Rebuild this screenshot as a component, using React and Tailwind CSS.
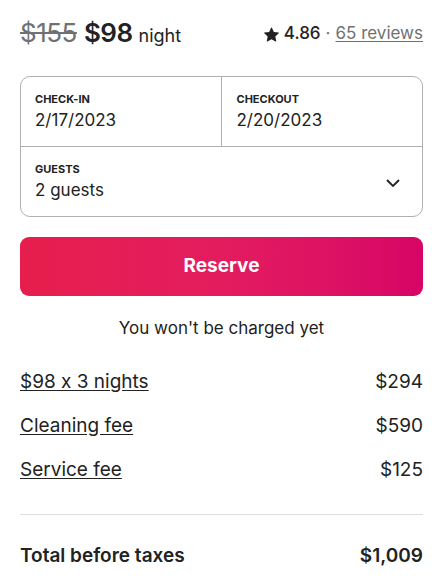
import React from "react";

function Star() {
  return (
    <svg viewBox="0 0 32 32" className="w-[15px] h-[15px]" fill="#222">
      <path d="M15.1 1.58l-4.13 8.88-9.86 1.27a1 1 0 0 0-.54 1.74l7.3 6.57-1.97 9.85a1 1 0 0 0 1.48 1.06l8.62-5 8.63 5a1 1 0 0 0 1.48-1.06l-1.97-9.85 7.3-6.57a1 1 0 0 0-.55-1.73l-9.86-1.28-4.12-8.88a1 1 0 0 0-1.82 0z" />
    </svg>
  );
}

function Chevron() {
  return (
    <svg viewBox="0 0 32 32" className="w-[16px] h-[16px]" fill="none" stroke="#222" strokeWidth="4">
      <path d="M28 12L16.7 23.3a1 1 0 0 1-1.4 0L4 12" />
    </svg>
  );
}

export default function App() {
  return (
    <div className="w-[439px] h-[588px] bg-white pl-[20px] pr-[16px] text-[#222] [font-feature-settings:'calt'_0]" style={{ fontFamily: "Inter, 'Noto Sans', sans-serif" }}>
      <div className="flex items-center justify-between h-[64px]">
        <div className="flex items-baseline">
          <span className="text-[26px] text-[#717171] line-through tracking-[-0.5px]">$155</span>
          <span className="text-[26px] font-semibold ml-[7px] tracking-[-0.5px]">$98</span>
          <span className="text-[18px] ml-[6px]">night</span>
        </div>
        <div className="flex items-center text-[17px] pt-[4px]">
          <Star />
          <span className="ml-[5px] font-medium">4.86</span>
          <span className="mx-[5px] text-[#717171]">·</span>
          <span className="text-[#717171] underline underline-offset-2">65 reviews</span>
        </div>
      </div>

      <div className="mt-[12px] border border-[#b0b0b0] rounded-[10px]">
        <div className="flex h-[70px] border-b border-[#b0b0b0]">
          <div className="flex-1 flex flex-col justify-center pl-[14px] border-r border-[#b0b0b0]">
            <div className="text-[11px] font-bold leading-[14px]">CHECK-IN</div>
            <div className="text-[17px] leading-[22px] mt-[3px]">2/17/2023</div>
          </div>
          <div className="flex-1 flex flex-col justify-center pl-[15px]">
            <div className="text-[11px] font-bold leading-[14px]">CHECKOUT</div>
            <div className="text-[17px] leading-[22px] mt-[3px]">2/20/2023</div>
          </div>
        </div>
        <div className="flex h-[69px] items-center justify-between pl-[14px] pr-[21px]">
          <div className="flex flex-col">
            <div className="text-[11px] font-bold leading-[14px]">GUESTS</div>
            <div className="text-[17px] leading-[22px] mt-[3px]">2 guests</div>
          </div>
          <Chevron />
        </div>
      </div>

      <button className="mt-[20px] w-full h-[59px] rounded-[9px] bg-gradient-to-r from-[#e61e4d] via-[#e31c5f] to-[#d70466] text-white text-[19px] font-bold">
        Reserve
      </button>

      <div className="text-center text-[17px] mt-[20px] leading-[24px]">You won't be charged yet</div>

      <div className="mt-[30px] flex flex-col gap-[20px] text-[19px] leading-[24px]">
        <div className="flex justify-between">
          <span className="underline underline-offset-2">$98 x 3 nights</span>
          <span>$294</span>
        </div>
        <div className="flex justify-between">
          <span className="underline underline-offset-2">Cleaning fee</span>
          <span>$590</span>
        </div>
        <div className="flex justify-between">
          <span className="underline underline-offset-2">Service fee</span>
          <span>$125</span>
        </div>
      </div>

      <div className="mt-[32px] border-t border-[#dddddd]"></div>

      <div className="mt-[29px] flex justify-between text-[19px] font-semibold leading-[24px]">
        <span>Total before taxes</span>
        <span>$1,009</span>
      </div>
    </div>
  );
}
